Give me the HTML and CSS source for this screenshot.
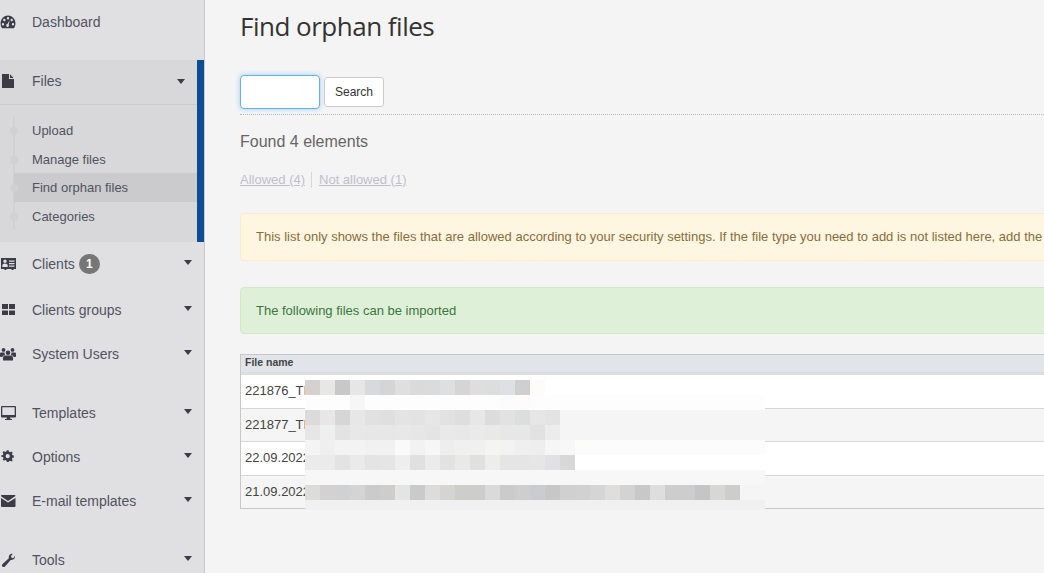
FILE: index.html
```html
<!DOCTYPE html>
<html lang="en">
<head>
    <meta charset="UTF-8">
    <meta name="viewport" content="width=device-width, initial-scale=1.0">
    <title>Find orphan files</title>
    <link rel="stylesheet" href="styles.css">
</head>
<body>
    <nav class="sidebar">
        <a class="nav-item first" href="#">
            <svg class="nav-icon" viewBox="0 0 16 16"><path fill-rule="evenodd" d="M8 1.500a7.500 7.500 0 0 1 7.500 7.500c0 1.900-.6 3.600-1.500 5.200H2A8.500 8.500 0 0 1 .5 9 7.500 7.500 0 0 1 8 1.500zM8 3a1.200 1.200 0 1 0 0 2.400A1.200 1.200 0 0 0 8 3zM4.300 4.800a1.200 1.200 0 1 0 0 2.400 1.200 1.200 0 0 0 0-2.400zM11.700 4.800a1.200 1.200 0 1 0 0 2.400 1.200 1.200 0 0 0 0-2.400zM3 9a1.200 1.200 0 1 0 0 2.400A1.200 1.200 0 0 0 3 9zM13 9a1.200 1.200 0 1 0 0 2.400A1.200 1.200 0 0 0 13 9zM9.600 6.200 7.400 10.100a1.400 1.400 0 1 0 1.300.5z"/></svg>
            <span>Dashboard</span>
        </a>

        <div class="nav-open">
            <a class="nav-item open-head" href="#">
                <svg class="nav-icon" viewBox="0 0 16 16"><path d="M2 1h7v5h5v9H2zM10 1.300 13.700 5H10z"/></svg>
                <span>Files</span>
                <i class="caret"></i>
            </a>
            <ul class="sub-menu">
                <li><a href="#">Upload</a></li>
                <li><a href="#">Manage files</a></li>
                <li class="active"><a href="#">Find orphan files</a></li>
                <li><a href="#">Categories</a></li>
            </ul>
        </div>

        <a class="nav-item tall" href="#">
            <svg class="nav-icon" viewBox="0 0 16 16"><path fill-rule="evenodd" d="M1 2h15v11h-2.500v1h-2v-1h-5v1h-2v-1H1zM5 3.500a1.700 1.700 0 1 0 0 3.400 1.700 1.700 0 0 0 0-3.400zM2.300 11h5.400V9.500C7.700 8.200 6.600 7.500 5 7.500s-2.700.7-2.700 2zM9 4.500v1.200h5.500V4.500zM9 7v1.200h5.500V7zM9 9.500v1.200h5.500V9.500z"/></svg>
            <span>Clients</span>
            <b class="badge">1</b>
            <i class="caret"></i>
        </a>
        <a class="nav-item" href="#">
            <svg class="nav-icon" viewBox="0 0 16 16"><path d="M2 2h6v5H2zM9 2h6v5H9zM2 8.500h6V13H2zM9 8.500h6V13H9z"/></svg>
            <span>Clients groups</span>
            <i class="caret"></i>
        </a>
        <a class="nav-item section" href="#">
            <svg class="nav-icon" viewBox="0 0 16 16"><path d="M8 4.500a2.300 2.300 0 1 1 0 4.600 2.300 2.300 0 0 1 0-4.600zM3.500 2a1.900 1.900 0 1 1 0 3.800 1.900 1.900 0 0 1 0-3.800zM12.500 2a1.900 1.900 0 1 1 0 3.800 1.900 1.900 0 0 1 0-3.800zM5 9.500h6c1.200 0 2 1 2 2.500v2.500H3V12c0-1.500.8-2.500 2-2.500zM1 6.500h3.500L5 9c-1.300.2-2.400 1-2.700 2H1c-.4 0-1-.3-1-1V8c0-1 .4-1.500 1-1.500zM11.500 6.500H15c.6 0 1 .5 1 1.500v2c0 .7-.6 1-1 1h-1.300c-.3-1-1.400-1.800-2.700-2z"/></svg>
            <span>System Users</span>
            <i class="caret"></i>
        </a>

        <a class="nav-item" href="#">
            <svg class="nav-icon" viewBox="0 0 16 16"><path fill-rule="evenodd" d="M2 1h13a1 1 0 0 1 1 1v9.500a1 1 0 0 1-1 1h-5l.5 1.500H12v1H5v-1h1.500l.5-1.500H2a1 1 0 0 1-1-1V2a1 1 0 0 1 1-1zM2.300 2.300v7.700h12.400V2.300z"/></svg>
            <span>Templates</span>
            <i class="caret"></i>
        </a>
        <a class="nav-item" href="#">
            <svg class="nav-icon" viewBox="0 0 16 16"><path fill-rule="evenodd" d="M7 2h2l.4 1.700 1.300.5 1.500-.9 1.400 1.400-.9 1.500.5 1.300 1.700.4v2l-1.700.4-.5 1.300.9 1.500-1.400 1.400-1.500-.9-1.300.5L9 15H7l-.4-1.700-1.300-.5-1.500.9-1.400-1.400.9-1.500-.5-1.300L1 9.500v-2l1.700-.4.5-1.300-.9-1.500 1.400-1.400 1.500.9 1.300-.5zM8 6.200a2.300 2.300 0 1 0 0 4.600 2.300 2.300 0 0 0 0-4.600z" transform="translate(.5 -.5) scale(.9)"/></svg>
            <span>Options</span>
            <i class="caret"></i>
        </a>
        <a class="nav-item section" href="#">
            <svg class="nav-icon" viewBox="0 0 16 16"><path d="M1.500 2h13c.5 0 1 .4 1 1l-7.500 5L1 3.300c0-.7.100-1.300.5-1.300zM1 5l7 4.600L15.500 5v8c0 .6-.5 1-1 1h-13c-.3 0-.5-.4-.5-1z"/></svg>
            <span>E-mail templates</span>
            <i class="caret"></i>
        </a>

        <a class="nav-item" href="#">
            <svg class="nav-icon" viewBox="0 0 16 16"><path d="M15 3.800c.4 2.500-1.700 4.700-4.300 4.100L5 14.400c-.8.900-1.900.9-2.600.2-.7-.7-.6-1.700.2-2.500L8.900 6.300C8.200 3.700 10.300 1.400 12.900 1.800l-2 2.200.6 1.800 1.700.4z"/></svg>
            <span>Tools</span>
            <i class="caret"></i>
        </a>
    </nav>

    <main class="content">
        <h1>Find orphan files</h1>

        <form class="search-form">
            <input type="text" class="search-input">
            <button type="button" class="search-button">Search</button>
        </form>

        <p class="found">Found 4 elements</p>

        <div class="filters">
            <a href="#">Allowed (4)</a>
            <a href="#">Not allowed (1)</a>
        </div>

        <div class="alert alert-warning">This list only shows the files that are allowed according to your security settings. If the file type you need to add is not listed here, add the</div>
        <div class="alert alert-success">The following files can be imported</div>

        <div class="table-wrap">
            <table class="files">
                <thead>
                    <tr><th>File name</th></tr>
                </thead>
                <tbody>
                    <tr><td>221876_TI</td></tr>
                    <tr><td>221877_TI</td></tr>
                    <tr><td>22.09.2022</td></tr>
                    <tr><td>21.09.2022</td></tr>
                </tbody>
            </table>

            <!-- names are pixelated in the source, one block is 15px -->
            <svg class="mosaic" width="460" height="130" viewBox="0 0 460 130" shape-rendering="crispEdges">
                <path fill="#fdfdfd" d="M0 15h460v15H0z"/>
                <path fill="#f5f5f5" d="M0 30h460v30H0z"/>
                <path fill="#fcfcfc" d="M0 60h460v15H0z"/>
                <path fill="#fff" d="M0 75h460v15H0z"/>
                <path fill="#f7f7f7" d="M0 90h460v15H0z"/>
                <path fill="#f5f5f5" d="M0 105h460v15H0z"/>
                <path fill="#f0f0f0" d="M0 120h460v10H0z"/>

                <g>
                    <rect x="0" fill="#d4d1cf"/><rect x="15" fill="#e8e7e5"/><rect x="30" fill="#c8c8c8"/><rect x="45" fill="#e6e6e6"/><rect x="60" fill="#d8d9dc"/><rect x="75" fill="#d5d5d5"/><rect x="90" fill="#dfdfdf"/><rect x="105" fill="#dadada"/><rect x="120" fill="#dadbdc"/><rect x="135" fill="#dde0df"/><rect x="150" fill="#d5d5d5"/><rect x="165" fill="#dfdddd"/><rect x="180" fill="#dcdedd"/><rect x="195" fill="#dfe0e3"/><rect x="210" fill="#cfcfd2"/><rect x="225" fill="#fdfcf8"/>
                </g>
                <g transform="translate(0 15)">
                    <rect x="45" fill="#f6f6f6"/><rect x="195" fill="#fbfcfe"/><rect x="210" fill="#fdfcfb"/>
                </g>
                <g transform="translate(0 30)">
                    <rect x="0" fill="#dcdbda"/><rect x="15" fill="#e8e7e5"/><rect x="30" fill="#d6d6d6"/><rect x="45" fill="#e7e7e7"/><rect x="60" fill="#e1e1e1"/><rect x="75" fill="#dfdfdf"/><rect x="90" fill="#e4e4e4"/><rect x="105" fill="#e3e3e3"/><rect x="120" fill="#e5e6e8"/><rect x="135" fill="#e2e2e2"/><rect x="150" fill="#dedede"/><rect x="165" fill="#e7e7e7"/><rect x="180" fill="#dcdcdc"/><rect x="195" fill="#e2e2e2"/><rect x="210" fill="#dbdedc"/><rect x="225" fill="#e6e6e6"/><rect x="240" fill="#e3e3e3"/>
                </g>
                <g transform="translate(0 45)">
                    <rect x="0" fill="#e6e6e6"/><rect x="15" fill="#efefef"/><rect x="30" fill="#e3e3e3"/><rect x="45" fill="#e8e8e8"/><rect x="60" fill="#e7e7e7"/><rect x="75" fill="#e7e7e7"/><rect x="90" fill="#e8e8e8"/><rect x="105" fill="#e6e6e6"/><rect x="120" fill="#e4e4e4"/><rect x="135" fill="#e9e9e9"/><rect x="150" fill="#e8e8e8"/><rect x="165" fill="#eaeaea"/><rect x="180" fill="#e9e9e7"/><rect x="195" fill="#e7e7e7"/><rect x="210" fill="#e6e7e9"/><rect x="225" fill="#e2e2e2"/><rect x="240" fill="#ecedeb"/>
                </g>
                <g transform="translate(0 60)">
                    <rect x="0" fill="#f4f4f4"/><rect x="15" fill="#efefef"/><rect x="30" fill="#f3f3f3"/><rect x="45" fill="#f3f3f3"/><rect x="60" fill="#f1f1f1"/><rect x="75" fill="#f1f1f0"/><rect x="90" fill="#fafafa"/><rect x="105" fill="#f2f2f2"/><rect x="120" fill="#f6f6f5"/><rect x="135" fill="#eeeeee"/><rect x="150" fill="#f0f0ef"/><rect x="165" fill="#eff1f0"/><rect x="180" fill="#f4f4f2"/><rect x="195" fill="#f3f3f3"/><rect x="210" fill="#efefef"/><rect x="225" fill="#eeeeee"/><rect x="240" fill="#f6f6f6"/><rect x="255" fill="#f6f8f7"/><rect x="270" fill="#fcfcf9"/>
                </g>
                <g transform="translate(0 75)">
                    <rect x="0" fill="#ebebeb"/><rect x="15" fill="#ebebeb"/><rect x="30" fill="#e3e3e3"/><rect x="45" fill="#eaeaea"/><rect x="60" fill="#e4e4e4"/><rect x="75" fill="#e5e5e5"/><rect x="90" fill="#edefee"/><rect x="105" fill="#e0e0e0"/><rect x="120" fill="#ebebeb"/><rect x="135" fill="#e3e1e2"/><rect x="150" fill="#e9e9e7"/><rect x="165" fill="#e0e0e0"/><rect x="180" fill="#edeeec"/><rect x="195" fill="#e4e6e5"/><rect x="210" fill="#e5e5e5"/><rect x="225" fill="#e6e6e6"/><rect x="240" fill="#e0e1e4"/><rect x="255" fill="#d8d8d8"/>
                </g>
                <g transform="translate(0 105)">
                    <rect x="0" fill="#dcdcda"/><rect x="15" fill="#d3d1d1"/><rect x="30" fill="#cfd1d3"/><rect x="45" fill="#d4d4d4"/><rect x="60" fill="#cbcbcb"/><rect x="75" fill="#cfcdcc"/><rect x="90" fill="#e3e5e4"/><rect x="105" fill="#cacaca"/><rect x="120" fill="#dcdcdc"/><rect x="135" fill="#d5d4d2"/><rect x="150" fill="#cdcdcb"/><rect x="165" fill="#cdcdcb"/><rect x="180" fill="#dadada"/><rect x="195" fill="#cbcbcb"/><rect x="210" fill="#cecece"/><rect x="225" fill="#cbccd0"/><rect x="240" fill="#c7c7c7"/><rect x="255" fill="#d0d0d0"/><rect x="270" fill="#d1d1d1"/><rect x="285" fill="#d5d5d5"/><rect x="300" fill="#dfdedc"/><rect x="315" fill="#d3d3d3"/><rect x="330" fill="#c8c8c8"/><rect x="345" fill="#dedede"/><rect x="360" fill="#cdcdcd"/><rect x="375" fill="#cdcdcd"/><rect x="390" fill="#c5c5c8"/><rect x="405" fill="#d7d7d4"/><rect x="420" fill="#cdcdcb"/>
                </g>
            </svg>
        </div>
    </main>
</body>
</html>
```

FILE: styles.css
```css
body {
    font-family: "Liberation Sans", Arial, sans-serif;
    font-size: 14px;
    color: #555;
    background: #f4f4f4;
    margin: 0;
    height: 100vh;
    display: flex;
    overflow: hidden;
}

a {
    text-decoration: none;
    color: inherit;
}

/* sidebar */
.sidebar {
    flex: none;
    box-sizing: border-box;
    width: 205px;
    height: 100vh;
    background: #e0e0e2;
    border-right: 1px solid #c9c9cb;
    color: #50535f;
}

.nav-item {
    display: flex;
    align-items: center;
    height: 44px;
    padding-right: 12px;
}

.nav-item.first {
    margin-bottom: 16px;
}

.nav-item.tall {
    padding-bottom: 2px;
}

.section {
    margin-bottom: 15px;
}

.nav-icon {
    flex: none;
    width: 16px;
    height: 16px;
    margin-right: 16px;
    fill: #3b3c48;
}

.caret {
    margin-left: auto;
    margin-bottom: 4px;
    border-style: solid;
    border-width: 5px 4.5px 0;
    border-color: #3b3c48 transparent transparent;
}

.badge {
    width: 21px;
    height: 20px;
    margin-left: 4px;
    border-radius: 10px;
    background: #777;
    color: #fff;
    font-size: 12px;
    line-height: 20px;
    text-align: center;
}

.nav-open {
    background: #d8d8da;
    border-right: 7px solid #0a4f96;
}

.open-head {
    box-sizing: border-box;
    height: 45px;
    padding-bottom: 2px;
    border-bottom: 1px solid #cdcdcf;
}

.open-head .caret {
    margin-bottom: 0;
}

.sub-menu {
    position: relative;
    list-style: none;
    margin: 0;
    padding: 11px 0 12px 14px;
    font-size: 13px;
}

/* line of the tree */
.sub-menu::before {
    content: "";
    position: absolute;
    left: 13px;
    top: 12px;
    bottom: 12px;
    width: 2px;
    background: #d1d1d3;
}

.sub-menu li {
    position: relative;
    height: 28.500px;
    line-height: 30px;
    padding-left: 18px;
}

.sub-menu li::before {
    content: "";
    position: absolute;
    left: -4px;
    top: 11px;
    width: 8px;
    height: 8px;
    border-radius: 50%;
    background: #d1d1d3;
}

.sub-menu .active {
    background: #cbcbcd;
}

/* main column, wider than the window on purpose */
.content {
    flex: none;
    width: 1000px;
    padding-left: 35px;
}

h1 {
    font-family: "Open Sans", sans-serif;
    font-size: 26px;
    font-weight: 400;
    letter-spacing: -0.5px;
    line-height: 36px;
    color: #333;
    margin: 8px 0 31px;
}

.search-form {
    display: flex;
    align-items: center;
    gap: 4px;
    height: 39px;
    border-bottom: 1px dotted #bbb;
}

.search-input {
    box-sizing: border-box;
    width: 80px;
    height: 34px;
    padding: 0 8px;
    background: #fff;
    border: 1px solid #66afe9;
    border-radius: 4px;
    box-shadow: 0 0 5px rgba(102, 175, 233, 0.6);
    margin-top: -5px;
}

.search-button {
    box-sizing: border-box;
    width: 60px;
    height: 30px;
    background: #fff;
    border: 1px solid #ccc;
    border-radius: 3px;
    color: #333;
    font-family: inherit;
    font-size: 12px;
    margin-top: -5px;
}

.found {
    font-size: 16px;
    line-height: 20px;
    color: #666;
    margin: 17px 0 0;
}

.filters {
    display: flex;
    align-items: center;
    margin-top: 20px;
    font-size: 13px;
    line-height: 16px;
}

.filters a {
    color: #bfc0cb;
    text-decoration: underline;
}

.filters a + a {
    margin-left: 6px;
    padding-left: 7px;
    border-left: 1px solid #d8d8d8;
}

.alert {
    box-sizing: border-box;
    padding: 0 15px;
    border: 1px solid;
    border-radius: 4px;
    font-size: 13px;
    white-space: nowrap;
}

.alert-warning {
    height: 48px;
    line-height: 46px;
    margin-top: 25px;
    background: #fef6e0;
    border-color: #faecd0;
    color: #8a6d3b;
}

.alert-success {
    height: 47px;
    line-height: 45px;
    margin-top: 26px;
    background: #dff0d8;
    border-color: #d3e8c9;
    color: #3c763d;
}

.table-wrap {
    position: relative;
    margin-top: 20px;
}

.files {
    width: 100%;
    border-spacing: 0;
    border: 1px solid #c8c8c8;
    border-width: 1px 0 0 1px;
}

.files th {
    box-sizing: border-box;
    height: 20px;
    padding: 0 4px 3px;
    background: #e1e4e9;
    border-bottom: 3px solid #dcdcdc;
    color: #444;
    font-size: 10.500px;
    text-align: left;
}

.files td {
    box-sizing: border-box;
    height: 33px;
    padding: 0 4px 2px;
    background: #fff;
    border-bottom: 1px solid #d8d8d8;
    color: #444;
    font-size: 13px;
}

.files tr:nth-child(even) td {
    background: #f5f5f5;
}

/* odd rows are a pixel taller in the source */
.files tr:nth-child(odd) td {
    height: 34px;
    padding-bottom: 3px;
}

.files tr:last-child td {
    border-bottom-color: #c8c8c8;
}

.mosaic {
    position: absolute;
    left: 65px;
    top: 26px;
}

.mosaic rect {
    width: 15px;
    height: 15px;
}
```
